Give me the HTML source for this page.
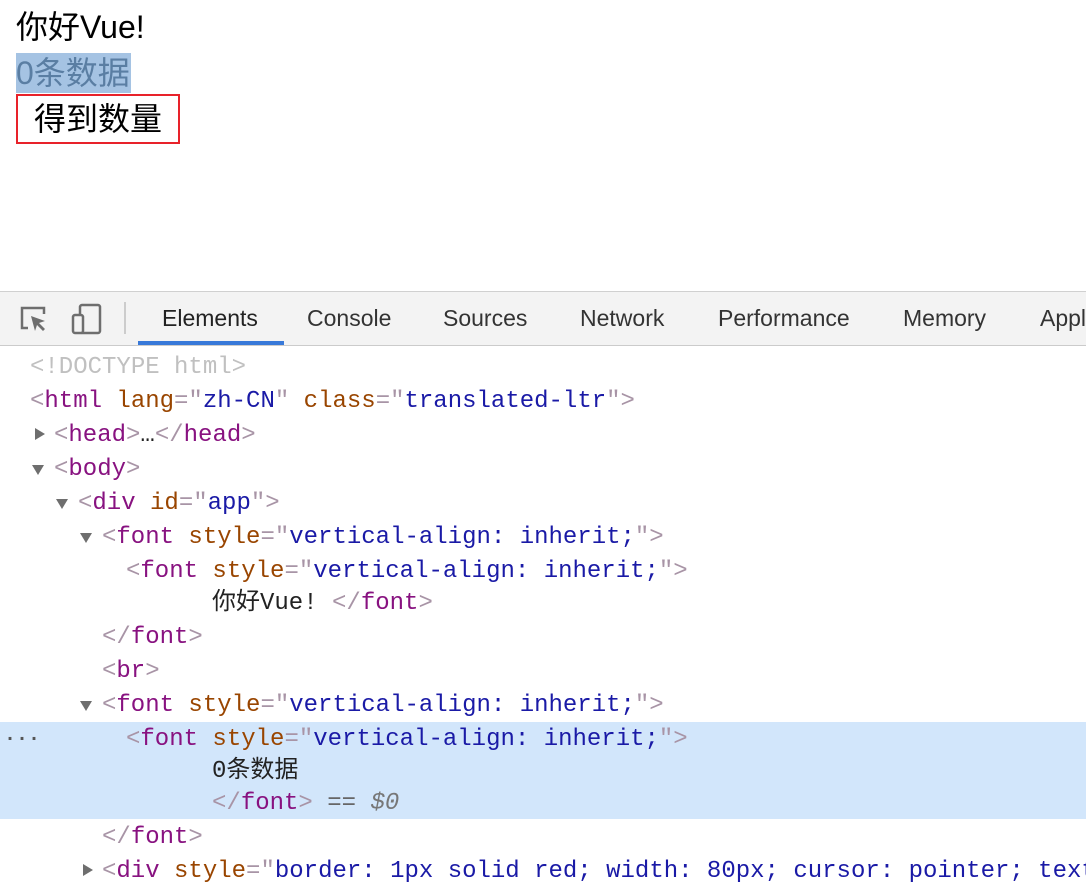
<!DOCTYPE html>
<html style="overflow:hidden"><head><meta charset="utf-8"><style>
body{margin:0;width:1086px;height:894px;overflow:hidden;background:#fff;position:relative;font-family:"Liberation Sans","Noto Sans CJK SC",sans-serif}
.wrap{position:absolute;left:0;top:0;width:1086px;height:894px;overflow:hidden}
.t{position:absolute;left:16px;font-size:32px;color:#000;line-height:38px}
.bar{position:absolute;left:0;top:291px;width:1086px;height:53px;background:#f3f3f3;border-top:1px solid #d0d0d0;border-bottom:1px solid #cbcbcb;overflow:hidden}
.tab{position:absolute;top:0;height:53px;line-height:52px;font-size:23px;color:#333;white-space:nowrap}
.l{position:absolute;font-family:"Liberation Mono","Noto Sans CJK SC",monospace;font-size:24px;white-space:pre;line-height:32px;color:#222}
.g{color:#a894a6}.p{color:#881280}.n{color:#994500}.v{color:#1a1aa6}
.ar{position:absolute;width:0;height:0}
.dn{border-left:6px solid transparent;border-right:6px solid transparent;border-top:10px solid #6e6e6e}
.rt{border-top:6px solid transparent;border-bottom:6px solid transparent;border-left:10px solid #6e6e6e}
</style></head><body><div class="wrap">
<div class="t" style="top:8px">你好Vue!</div>
<div class="t" style="top:53px;background:#a5c3e3;color:#5a7ea3;height:40px;line-height:40px;width:115px;overflow:hidden">0条数据</div>
<div style="position:absolute;left:16px;top:94px;width:160px;height:46px;border:2px solid #e8222a;font-size:32px;line-height:46px;text-align:center">得到数量</div>

<div class="bar">
<svg style="position:absolute;left:18px;top:12px" width="32" height="32" viewBox="0 0 32 32"><path d="M10 24H4V4h22v6" fill="none" stroke="#6e6e6e" stroke-width="2.5"/><path d="M13 12l14 5-6 2 6 6-2 2-6-6-2 6z" fill="#6e6e6e"/></svg>
<svg style="position:absolute;left:70px;top:10px" width="34" height="36" viewBox="0 0 34 36"><rect x="10" y="3" width="20" height="28" rx="2" fill="none" stroke="#6e6e6e" stroke-width="2.5"/><rect x="3" y="13" width="10" height="18" rx="2" fill="#f3f3f3" stroke="#6e6e6e" stroke-width="2.5"/></svg>
<div style="position:absolute;left:124px;top:10px;width:2px;height:32px;background:#ccc"></div>
<div class="tab" style="left:162px;color:#222">Elements</div>
<div style="position:absolute;left:138px;top:49px;width:146px;height:4px;background:#3879d9"></div>
<div class="tab" style="left:307px">Console</div>
<div class="tab" style="left:443px">Sources</div>
<div class="tab" style="left:580px">Network</div>
<div class="tab" style="left:718px">Performance</div>
<div class="tab" style="left:903px">Memory</div>
<div class="tab" style="left:1040px">Application</div>
</div>

<div style="position:absolute;left:0;top:722px;width:1086px;height:97px;background:#d2e6fb"></div>
<div class="l" style="left:4px;top:720px;color:#555;font-size:20px;font-weight:bold">...</div>

<div class="l" style="left:30px;top:352px;color:#c0c0c0">&lt;!DOCTYPE html&gt;</div>
<div class="l" style="left:30px;top:386px"><span class="g">&lt;</span><span class="p">html</span> <span class="n">lang</span><span class="g">="</span><span class="v">zh-CN</span><span class="g">"</span> <span class="n">class</span><span class="g">="</span><span class="v">translated-ltr</span><span class="g">"&gt;</span></div>
<div class="ar rt" style="left:35px;top:428px"></div>
<div class="l" style="left:54px;top:420px"><span class="g">&lt;</span><span class="p">head</span><span class="g">&gt;</span>…<span class="g">&lt;/</span><span class="p">head</span><span class="g">&gt;</span></div>
<div class="ar dn" style="left:32px;top:465px"></div>
<div class="l" style="left:54px;top:454px"><span class="g">&lt;</span><span class="p">body</span><span class="g">&gt;</span></div>
<div class="ar dn" style="left:56px;top:499px"></div>
<div class="l" style="left:78px;top:488px"><span class="g">&lt;</span><span class="p">div</span> <span class="n">id</span><span class="g">="</span><span class="v">app</span><span class="g">"&gt;</span></div>
<div class="ar dn" style="left:80px;top:533px"></div>
<div class="l" style="left:102px;top:522px"><span class="g">&lt;</span><span class="p">font</span> <span class="n">style</span><span class="g">="</span><span class="v">vertical-align: inherit;</span><span class="g">"&gt;</span></div>
<div class="l" style="left:126px;top:556px"><span class="g">&lt;</span><span class="p">font</span> <span class="n">style</span><span class="g">="</span><span class="v">vertical-align: inherit;</span><span class="g">"&gt;</span></div>
<div class="l" style="left:212px;top:588px">你好Vue! <span class="g">&lt;/</span><span class="p">font</span><span class="g">&gt;</span></div>
<div class="l" style="left:102px;top:622px"><span class="g">&lt;/</span><span class="p">font</span><span class="g">&gt;</span></div>
<div class="l" style="left:102px;top:656px"><span class="g">&lt;</span><span class="p">br</span><span class="g">&gt;</span></div>
<div class="ar dn" style="left:80px;top:701px"></div>
<div class="l" style="left:102px;top:690px"><span class="g">&lt;</span><span class="p">font</span> <span class="n">style</span><span class="g">="</span><span class="v">vertical-align: inherit;</span><span class="g">"&gt;</span></div>
<div class="l" style="left:126px;top:724px"><span class="g">&lt;</span><span class="p">font</span> <span class="n">style</span><span class="g">="</span><span class="v">vertical-align: inherit;</span><span class="g">"&gt;</span></div>
<div class="l" style="left:212px;top:756px">0条数据</div>
<div class="l" style="left:212px;top:788px"><span class="g">&lt;/</span><span class="p">font</span><span class="g">&gt;</span> <span style="color:#666">==</span> <i style="color:#777">$0</i></div>
<div class="l" style="left:102px;top:822px"><span class="g">&lt;/</span><span class="p">font</span><span class="g">&gt;</span></div>
<div class="ar rt" style="left:83px;top:864px"></div>
<div style="position:absolute;left:0;top:856px;width:1086px;height:38px;overflow:hidden">
<div class="l" style="left:102px;top:0"><span class="g">&lt;</span><span class="p">div</span> <span class="n">style</span><span class="g">="</span><span class="v">border: 1px solid red; width: 80px; cursor: pointer; text-align: center;</span><span class="g">"&gt;</span></div>
</div>
</div></body></html>
